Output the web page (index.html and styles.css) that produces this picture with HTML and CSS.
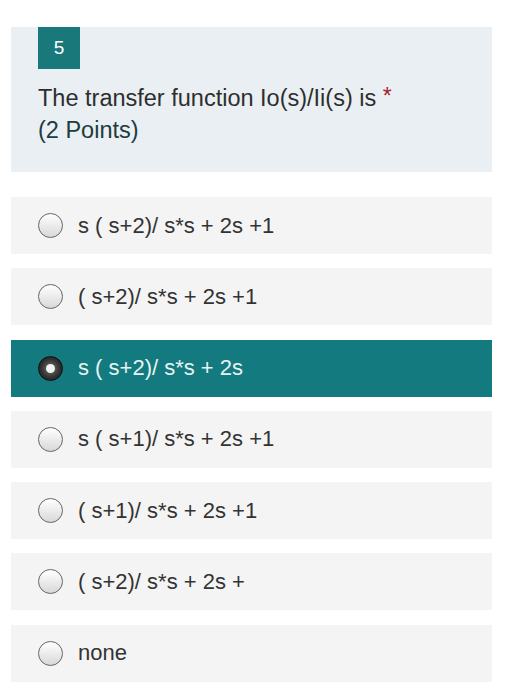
FILE: index.html
```html
<!DOCTYPE html>
<html lang="en">
<head>
     <meta charset="UTF-8">
     <meta name="viewport" content="width=device-width, initial-scale=1.0">
     <title>Question 5</title>
     <link rel="stylesheet" href="styles.css">
</head>
<body>
     <div class="wrapper">
          <div class="question-head">
               <div class="q-number">5</div>
               <div class="q-title">
                    The transfer function Io(s)/Ii(s) is <span class="required">*</span>
                    <div class="q-points">(2 Points)</div>
               </div>
          </div>
          <div class="choices">
               <label class="choice"><span class="radio"></span>s ( s+2)/ s*s + 2s +1</label>
               <label class="choice"><span class="radio"></span>( s+2)/ s*s + 2s +1</label>
               <label class="choice selected"><span class="radio checked"></span>s ( s+2)/ s*s + 2s</label>
               <label class="choice"><span class="radio"></span>s ( s+1)/ s*s + 2s +1</label>
               <label class="choice"><span class="radio"></span>( s+1)/ s*s + 2s +1</label>
               <label class="choice"><span class="radio"></span>( s+2)/ s*s + 2s +</label>
               <label class="choice"><span class="radio"></span>none</label>
          </div>
     </div>
</body>
</html>
```

FILE: styles.css
```css
body{
     margin: 0;
     background: #ffffff;
     font-family: "Liberation Sans", Arial, sans-serif;
     color: #333333;
}
.wrapper{
     padding: 27px 21px 0 11px;
}
.question-head{
     background: #e9eff3;
     padding: 0 20px 26px 27px;
}
.q-number{
     width: 42px;
     height: 42px;
     background: #19787a;
     color: #ffffff;
     font-size: 19px;
     line-height: 42px;
     text-align: center;
}
.q-title{
     margin-top: 13px;
     font-size: 23.5px;
     line-height: 32px;
     color: #2e2e2e;
}
.required{
     color: #a4262c;
     font-size: 23px;
     line-height: 0;
     vertical-align: 2px;
}
.q-points{
     color: #213c3c;
}
.choices{
     padding-top: 25px;
}
.choice{
     display: flex;
     align-items: center;
     height: 57px;
     margin-bottom: 14.3px;
     padding-left: 27px;
     background: #f4f4f4;
     font-size: 22px;
     color: #333333;
}
.choice.selected{
     background: #137a7f;
     color: #e6f4f4;
}
.radio{
     width: 23px;
     height: 23px;
     border: 1px solid #666666;
     border-radius: 50%;
     background: linear-gradient(#ffffff, #d8d8d8);
     margin-right: 15px;
     flex-shrink: 0;
     position: relative;
}
.radio.checked{
     border-color: #111111;
     background: radial-gradient(circle, #777777 0, #333333 55%, #111111 100%);
}
.radio.checked::after{
     content: "";
     position: absolute;
     left: 7px;
     top: 7px;
     width: 9px;
     height: 9px;
     border-radius: 50%;
     background: #f2f2f2;
}
```
